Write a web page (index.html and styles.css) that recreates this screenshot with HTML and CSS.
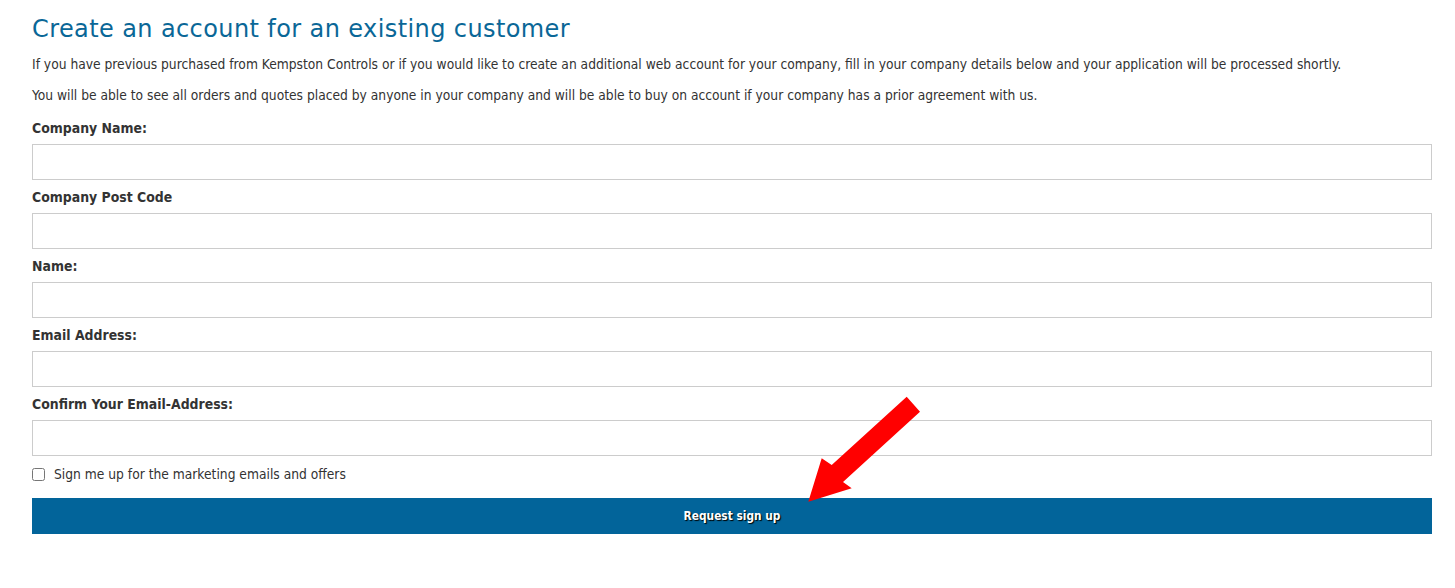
FILE: index.html
```html
<!DOCTYPE html>
<html>
<head>
<meta charset="utf-8">
<link rel="stylesheet" href="styles.css">
</head>
<body>
<div class="page">
  <h1 class="title">Create an account for an existing customer</h1>
  <p class="intro">If you have previous purchased from Kempston Controls or if you would like to create an additional web account for your company, fill in your company details below and your application will be processed shortly.</p>
  <p class="intro">You will be able to see all orders and quotes placed by anyone in your company and will be able to buy on account if your company has a prior agreement with us.</p>
  <form class="form">
    <div class="field"><label class="label">Company Name:</label><input class="input" type="text"></div>
    <div class="field"><label class="label">Company Post Code</label><input class="input" type="text"></div>
    <div class="field"><label class="label">Name:</label><input class="input" type="text"></div>
    <div class="field"><label class="label">Email Address:</label><input class="input" type="text"></div>
    <div class="field"><label class="label">Confirm Your Email-Address:</label><input class="input" type="text"></div>
    <label class="check"><input type="checkbox" class="checkbox"><span>Sign me up for the marketing emails and offers</span></label>
    <div class="btn-wrap">
      <button type="button" class="button">Request sign up</button>
      <svg class="arrow" width="130" height="115" viewBox="0 0 130 115">
        <polygon points="106.7,6.7 120,21.7 43,92 51.7,98.3 8.3,111.7 21.7,68.3 31.7,75" fill="#ff0000"/>
      </svg>
    </div>
  </form>
</div>
</body>
</html>
```
FILE: styles.css
```css
html, body { margin: 0; padding: 0; background: #fff; }
.page {
  padding: 13px 23px 0 32px;
  font-family: "DejaVu Sans Condensed", "DejaVu Sans", sans-serif;
  color: #333;
}
.title {
  margin: 0 0 10px 0;
  font-family: "DejaVu Sans", sans-serif;
  font-weight: normal;
  font-size: 24px;
  letter-spacing: 0.4px;
  color: #0a6797;
  line-height: 32px;
}
.intro {
  margin: 0 0 13px 0;
  font-size: 13.7px;
  line-height: 18px;
}
.form { display: flex; flex-direction: column; padding-top: 2px; }
.field { display: flex; flex-direction: column; }
.label {
  font-weight: bold;
  font-size: 13.9px;
  line-height: 18px;
  height: 18px;
  color: #333;
}
.input {
  box-sizing: border-box;
  height: 36px;
  margin: 7px 0 8px 0;
  border: 1px solid #ccc;
  padding: 0 8px;
  width: 100%;
}
.check {
  display: flex; align-items: center; gap: 9px;
  font-size: 13.7px; line-height: 18px;
  margin: 1px 0 15px 0;
}
.checkbox { margin: 0; width: 13px; height: 13px; }
.btn-wrap { position: relative; }
.button {
  display: block;
  width: 100%; height: 36px;
  background: #02649a; color: #fff;
  border: 0;
  font-family: "DejaVu Sans Condensed", "DejaVu Sans", sans-serif;
  font-weight: bold; font-size: 11.8px;
  text-shadow: 1px 1px 1px #000;
}
.arrow { position: absolute; left: 768px; top: -108px; }
```
